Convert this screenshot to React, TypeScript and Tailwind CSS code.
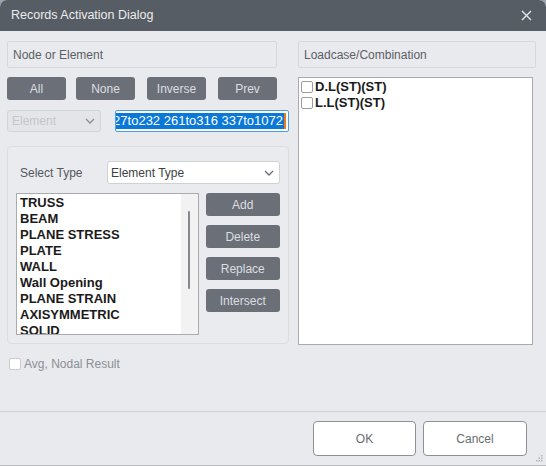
const elementTypes = [
  'TRUSS',
  'BEAM',
  'PLANE STRESS',
  'PLATE',
  'WALL',
  'Wall Opening',
  'PLANE STRAIN',
  'AXISYMMETRIC',
  'SOLID',
];

const loadcases = ['D.L(ST)(ST)', 'L.L(ST)(ST)'];

function Chevron({ className }: { className?: string }) {
  return (
    <svg className={className} width="10" height="6" viewBox="0 0 10 6" fill="none">
      <path d="M1 1l4 4 4-4" stroke="currentColor" strokeWidth="1.3" />
    </svg>
  );
}

function GrayButton({ label, className }: { label: string; className?: string }) {
  return (
    <button
      className={`h-[23px] rounded-[3px] bg-[#6b7078] text-[12px] text-[#dcdde0] flex items-center justify-center ${className ?? ''}`}>
      {label}
    </button>
  );
}

function CheckBox({ className }: { className?: string }) {
  return <span className={`inline-block w-[12px] h-[12px] rounded-[2px] border border-[#9a9ca0] bg-white ${className ?? ''}`} />;
}

export default function App() {
  return (
    <div className="w-[546px] h-[466px] bg-[#9aa3ad] overflow-hidden" style={{ fontFamily: '"Liberation Sans", Arial, sans-serif' }}>
      <div className="w-full h-full flex flex-col rounded-t-[7px] overflow-hidden bg-[#e9eaee] border-b border-[#b8babe]">
        {/* Title bar */}
        <div className="h-[31px] shrink-0 bg-[#575d65] flex items-center justify-between pl-[11px] pr-[14px]">
          <span className="text-[12.5px] text-[#ececec]">Records Activation Dialog</span>
          <svg width="11" height="11" viewBox="0 0 11 11">
            <path d="M1 1l9 9M10 1l-9 9" stroke="#e6e6e6" strokeWidth="1.4" />
          </svg>
        </div>

        {/* Body */}
        <div className="h-[380px] shrink-0 flex pl-[7px] pt-[10px] gap-[9px]">
          {/* Left column */}
          <div className="w-[282px] flex flex-col">
            <div className="w-[270px] h-[27px] border border-[#d6d8dc] rounded-[2px] flex items-center pl-[5px] text-[12px] text-[#5c5f64]">
              Node or Element
            </div>

            <div className="w-[270px] mt-[9px] flex justify-between">
              <GrayButton label="All" className="w-[59px]" />
              <GrayButton label="None" className="w-[59px] ml-[10px]" />
              <GrayButton label="Inverse" className="w-[59px] ml-[12px]" />
              <GrayButton label="Prev" className="w-[59px] ml-[12px]" />
            </div>

            <div className="mt-[10px] flex items-center h-[22px]">
              <div className="w-[94px] h-[22px] rounded-[3px] border border-[#d2d4d8] bg-[#e4e5e9] flex items-center justify-between pl-[4px] pr-[5px] text-[12px] text-[#c4c6ca]">
                <span>Element</span>
                <Chevron className="text-[#8a8d92]" />
              </div>
              <div className="ml-[14px] w-[174px] h-[22px] rounded-[2px] border border-[#4a9fe0] bg-white flex items-center justify-end overflow-hidden pr-[2px]">
                <span className="whitespace-nowrap bg-[#0a78d7] text-white text-[13px] leading-[16px] px-[1px]">227to232 261to316 337to1072</span>
                <span className="w-[2px] h-[16px] bg-[#e87a1e] shrink-0" />
              </div>
            </div>

            {/* Group box */}
            <div className="mt-[14px] w-[282px] h-[198px] border border-[#dcdde1] rounded-[4px] bg-[#eaebef] flex flex-col pl-[8px] pr-[8px] pt-[14px]">
              <div className="flex items-center h-[23px]">
                <span className="w-[91px] pl-[4px] text-[12px] text-[#55585d]">Select Type</span>
                <div className="flex-1 h-[23px] rounded-[3px] border border-[#cfd1d5] bg-white flex items-center justify-between pl-[3px] pr-[5px] text-[12px] text-[#3c3f44]">
                  <span>Element Type</span>
                  <Chevron className="text-[#6a6d72]" />
                </div>
              </div>

              <div className="mt-[9px] flex gap-[7px]">
                <div className="w-[184px] h-[142px] border border-[#a9abb0] bg-white flex overflow-hidden">
                  <div className="flex-1 pl-[3px] pt-[1px]">
                    {elementTypes.map((t) => (
                      <div key={t} className="h-[16px] leading-[16px] text-[13px] font-bold text-[#1a1a1a] whitespace-nowrap">
                        {t}
                      </div>
                    ))}
                  </div>
                  <div className="w-[17px] bg-[#f2f2f3] flex justify-center pt-[17px]">
                    <div className="w-[2px] h-[78px] bg-[#85888d] rounded-full" />
                  </div>
                </div>
                <div className="w-[75px] flex flex-col gap-[9px]">
                  <GrayButton label="Add" />
                  <GrayButton label="Delete" />
                  <GrayButton label="Replace" />
                  <GrayButton label="Intersect" />
                </div>
              </div>
            </div>

            <div className="mt-[11px] flex items-center pl-[2px]">
              <CheckBox className="border-[#c8cacd]" />
              <span className="ml-[3px] text-[12px] text-[#8c8f94]">Avg, Nodal Result</span>
            </div>
          </div>

          {/* Right column */}
          <div className="w-[238px] flex flex-col">
            <div className="h-[27px] border border-[#d6d8dc] rounded-[2px] flex items-center pl-[5px] text-[12px] text-[#5c5f64]">
              Loadcase/Combination
            </div>
            <div className="mt-[9px] w-[235px] h-[268px] border border-[#a9abb0] bg-white pt-[1px] pl-[2px]">
              {loadcases.map((l) => (
                <div key={l} className="h-[16px] flex items-center">
                  <CheckBox />
                  <span className="ml-[2px] text-[13px] font-bold text-[#1a1a1a]">{l}</span>
                </div>
              ))}
            </div>
          </div>
        </div>

        {/* Footer */}
        <div className="flex-1 border-t border-[#cfd0d4] flex justify-end items-start pt-[9px] pr-[19px] gap-[7px] relative">
          <button className="w-[103px] h-[35px] rounded-[4px] border border-[#8e9095] bg-white text-[12px] text-[#6a6d72]">OK</button>
          <button className="w-[104px] h-[35px] rounded-[4px] border border-[#8e9095] bg-white text-[12px] text-[#6a6d72]">Cancel</button>
          <svg className="absolute right-[3px] bottom-[3px]" width="7" height="7" viewBox="0 0 7 7">
            <rect x="5" y="0" width="1.5" height="1.5" fill="#b0b2b6" />
            <rect x="2.5" y="2.5" width="1.5" height="1.5" fill="#b0b2b6" />
            <rect x="5" y="2.5" width="1.5" height="1.5" fill="#b0b2b6" />
            <rect x="0" y="5" width="1.5" height="1.5" fill="#b0b2b6" />
            <rect x="2.5" y="5" width="1.5" height="1.5" fill="#b0b2b6" />
            <rect x="5" y="5" width="1.5" height="1.5" fill="#b0b2b6" />
          </svg>
        </div>
      </div>
    </div>
  );
}
